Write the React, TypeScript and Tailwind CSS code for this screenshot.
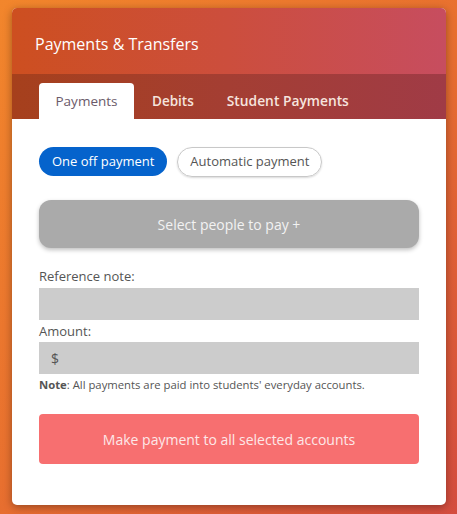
import React from "react";

export default function App() {
  const font = { fontFamily: "'Open Sans', 'Noto Sans', sans-serif" };
  return (
    <div
      className="w-[457px] h-[514px] pt-[8px] pl-[12px] bg-[linear-gradient(135deg,#f2862c_0%,#e8702f_50%,#d44c3f_100%)]"
      style={font}
    >
      <div className="w-[434px] h-[497px] bg-white rounded-[5px] overflow-hidden shadow-[0_2px_8px_rgba(0,0,0,0.35)] flex flex-col">
        <div className="h-[66px] flex items-center pl-[23px] pt-[6px] bg-[linear-gradient(90deg,#cd4f20_0%,#cc4e3d_50%,#c74d5f_100%)]">
          <span className="text-white text-[16px] leading-[20px]">Payments &amp; Transfers</span>
        </div>
        <div className="h-[45px] flex items-end pl-[27px] bg-[linear-gradient(90deg,#a6401c_0%,#a43e33_50%,#a03b46_100%)]">
          <div className="w-[95px] h-[36px] bg-white rounded-t-[4px] flex items-center justify-center text-[13.5px] text-[#6b5a6a]">
            Payments
          </div>
          <div className="h-[36px] flex items-center ml-[18px] text-[13.5px] font-semibold text-[#f6e4de]">Debits</div>
          <div className="h-[36px] flex items-center ml-[33px] text-[13.8px] font-semibold text-[#f6e4de]">Student Payments</div>
        </div>
        <div className="px-[27px] pt-[28px] flex flex-col">
          <div className="flex gap-[10px]">
            <div className="h-[29px] px-[13px] rounded-full bg-[#0563cc] text-white text-[13px] flex items-center">
              One off payment
            </div>
            <div className="h-[30px] px-[12px] rounded-full border border-[#c8c8c8] text-[#555] text-[13px] flex items-center shadow-[0_1px_2px_rgba(0,0,0,0.15)]">
              Automatic payment
            </div>
          </div>
          <div className="mt-[23px] h-[48px] rounded-[12px] bg-[#aaaaaa] shadow-[0_2px_4px_rgba(0,0,0,0.25)] flex items-center justify-center text-[#f2f2f2] text-[14px]">
            Select people to pay +
          </div>
          <div className="mt-[20px] text-[13px] leading-[16px] text-[#555]">Reference note:</div>
          <div className="mt-[4px] h-[32px] bg-[#cccccc]"></div>
          <div className="mt-[3px] text-[13px] leading-[16px] text-[#555]">Amount:</div>
          <div className="mt-[3px] h-[32px] bg-[#cccccc] flex items-center pl-[12px] text-[14px] text-[#555]">$</div>
          <div className="mt-[4px] text-[11.3px] leading-[14px] text-[#555]">
            <span className="font-bold">Note</span>: All payments are paid into students' everyday accounts.
          </div>
          <div className="mt-[22px] h-[50px] rounded-[4px] bg-[#f76f70] flex items-center justify-center text-[#fde8e8] text-[14px]">
            Make payment to all selected accounts
          </div>
        </div>
      </div>
    </div>
  );
}
